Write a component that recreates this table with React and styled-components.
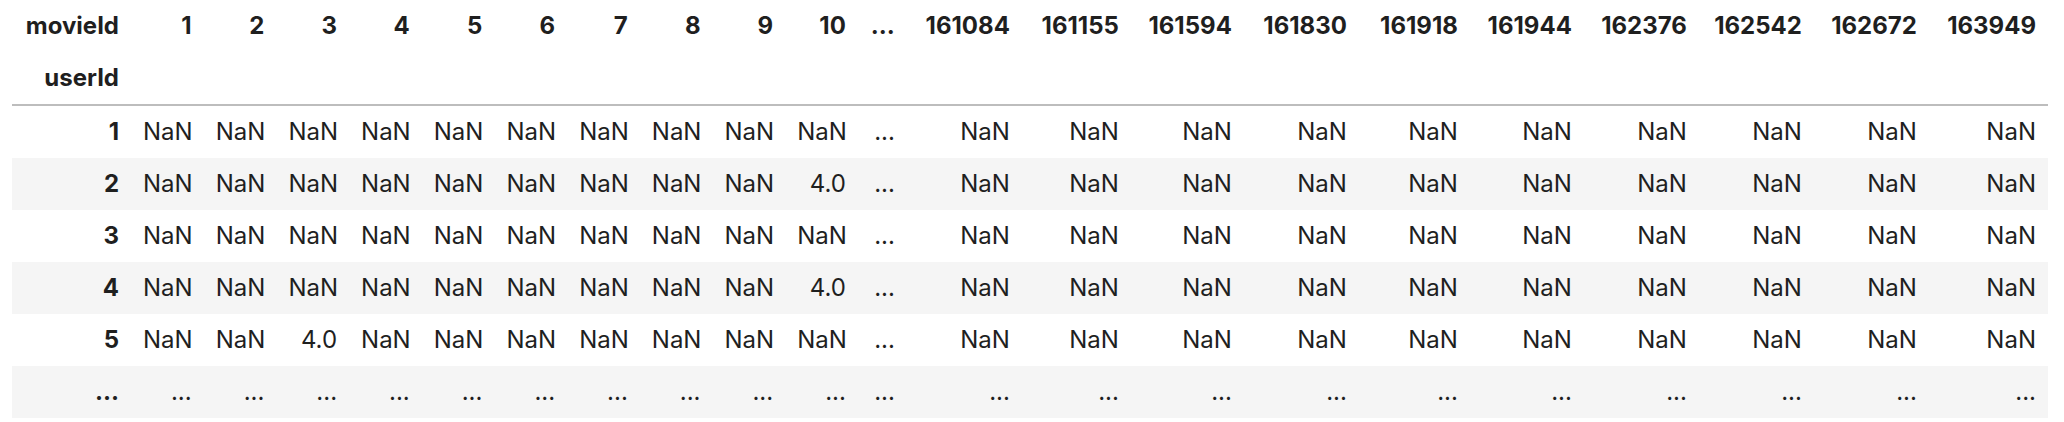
import React from "react";
import styled, { createGlobalStyle } from "styled-components";

const Global = createGlobalStyle`
  html, body { margin: 0; padding: 0; background: #fff; }
  body { font-family: Inter, "Liberation Sans", sans-serif; }
`;

const Page = styled.div`
  padding: 0 12px;
`;

const Table = styled.table`
  table-layout: fixed;
  border-collapse: collapse;
  border-spacing: 0;
  width: 2036px;
  font-family: Inter, "Liberation Sans", sans-serif;
  font-size: 24px;
  color: #1f1f1f;
`;

const Col = styled.col`
  width: ${(p) => p.$w}px;
`;

const Head = styled.thead`
  border-bottom: 2px solid #bdbdbd;
`;

const HeadRow = styled.tr`
  height: 52px;
`;

const Th = styled.th`
  font-weight: 700;
  text-align: right;
  vertical-align: middle;
  padding: 0 12px;
  line-height: 52px;
  white-space: nowrap;
`;

const Row = styled.tr`
  height: 52px;
  background: ${(p) => (p.$striped ? "#f5f5f5" : "#fff")};
`;

const Td = styled.td`
  text-align: right;
  vertical-align: middle;
  padding: 0 12px;
  line-height: 52px;
  white-space: nowrap;
  font-weight: 400;
`;

const leftCols = ["1", "2", "3", "4", "5", "6", "7", "8", "9", "10"];
const rightCols = [
  "161084", "161155", "161594", "161830", "161918",
  "161944", "162376", "162542", "162672", "163949",
];
const widths = [
  119,
  ...Array(10).fill(72.7),
  49,
  115, 109, 113, 115, 111, 114, 115, 115, 115, 119,
];

const special = {
  2: { 9: "4.0" },
  4: { 9: "4.0" },
  5: { 2: "4.0" },
};

const rows = [1, 2, 3, 4, 5];

export default function App() {
  return (
    <Page>
      <Global />
      <Table>
        <colgroup>
          {widths.map((w, i) => (
            <Col key={i} $w={w} />
          ))}
        </colgroup>
        <Head>
          <HeadRow>
            <Th>movieId</Th>
            {leftCols.map((c) => (
              <Th key={c}>{c}</Th>
            ))}
            <Th>...</Th>
            {rightCols.map((c) => (
              <Th key={c}>{c}</Th>
            ))}
          </HeadRow>
          <HeadRow>
            <Th>userId</Th>
            {widths.slice(1).map((_, i) => (
              <Th key={i} />
            ))}
          </HeadRow>
        </Head>
        <tbody>
          {rows.map((r, ri) => (
            <Row key={r} $striped={ri % 2 === 1}>
              <Th>{r}</Th>
              {leftCols.map((c, ci) => (
                <Td key={c}>{(special[r] && special[r][ci]) || "NaN"}</Td>
              ))}
              <Td>...</Td>
              {rightCols.map((c) => (
                <Td key={c}>NaN</Td>
              ))}
            </Row>
          ))}
          <Row $striped>
            <Th>...</Th>
            {leftCols.map((c) => (
              <Td key={c}>...</Td>
            ))}
            <Td>...</Td>
            {rightCols.map((c) => (
              <Td key={c}>...</Td>
            ))}
          </Row>
        </tbody>
      </Table>
    </Page>
  );
}
